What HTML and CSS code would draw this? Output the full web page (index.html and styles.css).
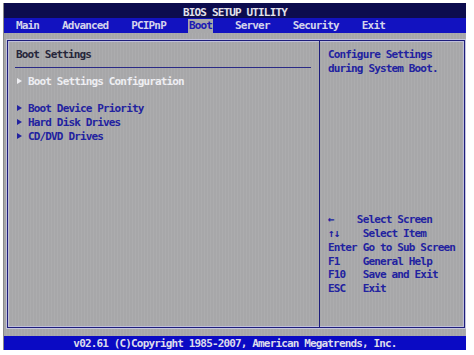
FILE: index.html
```html
<!DOCTYPE html>
<html lang="en">
<head>
  <meta charset="UTF-8" />
  <title>BIOS Setup Utility</title>
  <link rel="stylesheet" href="styles.css">
</head>
<body>

  <div class="screen">
    <!-- Title -->
    <div class="titlebar">BIOS SETUP UTILITY</div>

    <!-- Menu -->
    <div class="menubar">
      <span class="menu-item">Main</span>
      <span class="menu-item">Advanced</span>
      <span class="menu-item">PCIPnP</span>
      <span class="menu-item active">Boot</span>
      <span class="menu-item">Server</span>
      <span class="menu-item">Security</span>
      <span class="menu-item">Exit</span>
    </div>

    <!-- Main area -->
    <div class="main">
      <div class="frame">
        <div class="panel-left">
          <div class="heading">Boot Settings</div>
          <div class="rule"></div>
          <div class="item selected"><span class="arrow"></span>Boot Settings Configuration</div>
          <div class="spacer"></div>
          <div class="item"><span class="arrow"></span>Boot Device Priority</div>
          <div class="item"><span class="arrow"></span>Hard Disk Drives</div>
          <div class="item"><span class="arrow"></span>CD/DVD Drives</div>
        </div>

        <div class="panel-right">
          <div class="help-text">Configure Settings<br>during System Boot.</div>
          <div class="keys">
            <div class="key-row">&#8592;    Select Screen</div>
            <div class="key-row">&#8593;&#8595;    Select Item</div>
            <div class="key-row">Enter Go to Sub Screen</div>
            <div class="key-row">F1    General Help</div>
            <div class="key-row">F10   Save and Exit</div>
            <div class="key-row">ESC   Exit</div>
          </div>
        </div>
      </div>
    </div>

    <!-- Footer -->
    <div class="footer">v02.61 (C)Copyright 1985-2007, American Megatrends, Inc.</div>
  </div>

</body>
</html>
```

FILE: styles.css
```css
* {
  box-sizing: border-box;
}

body {
  margin: 0;
  background: #fff;
  font-family: "DejaVu Sans Mono", "Liberation Mono", monospace;
  font-size: 11px;
  font-weight: bold;
  letter-spacing: -0.85px;
}

.screen {
  width: 463px;
  height: 347px;
  margin: 3px 0 0 3px;
  display: flex;
  flex-direction: column;
  background: repeating-linear-gradient(90deg, #a7a7a9 0, #a7a7a9 2px, #acacae 2px, #acacae 3px);
  border-left: 1px solid #8a8a8a;
}

/* Title */
.titlebar {
  height: 15px;
  line-height: 20px;
  overflow: hidden;
  text-align: center;
  background: #0c0c4e;
  color: #e2e2ea;
}

/* Menu */
.menubar {
  height: 15px;
  display: flex;
  align-items: flex-end;
  gap: 23px;
  padding-left: 12px;
  background: #1212c0;
  color: #d4d4ec;
}

.menu-item {
  line-height: 13px;
  padding-bottom: 1px;
}

.menu-item.active {
  background: #a8a8aa;
  color: #1a1ab4;
  padding: 0 1px 1px;
  margin: 0 -1px;
}

/* Main area */
.main {
  flex: 1;
  min-height: 0;
  padding: 7px 1px 8px 3px;
}

.frame {
  height: 100%;
  display: flex;
  border: 1px solid #1e1e7c;
  box-shadow: 0 0 0 1px #c4c4dc, inset 0 0 0 1px #c0c0d8;
}

.panel-left {
  width: 312px;
  padding: 7px 8px 0 8px;
  border-right: 1px solid #1e1e7c;
  line-height: 14px;
  color: #2222a0;
}

.heading {
  color: #26263a;
}

.rule {
  height: 1px;
  margin: 5px 0 7px -1px;
  background: #2a2a86;
}

.item {
  white-space: pre;
}

.item.selected {
  color: #eeeef2;
}

.spacer {
  height: 13px;
}

/* solid right-pointing triangle */
.arrow {
  display: inline-block;
  width: 0;
  height: 0;
  margin: 0 6px 0 1px;
  border-left: 5px solid currentColor;
  border-top: 3px solid transparent;
  border-bottom: 3px solid transparent;
  vertical-align: 1px;
}

.panel-right {
  flex: 1;
  display: flex;
  flex-direction: column;
  justify-content: space-between;
  padding: 7px 0 31px 8px;
  line-height: 14px;
  color: #2222a0;
}

.key-row {
  white-space: pre;
  line-height: 13.8px;
}

/* Footer */
.footer {
  height: 14px;
  line-height: 15px;
  text-align: center;
  background: #0a0ac4;
  color: #dcdcec;
}
```
